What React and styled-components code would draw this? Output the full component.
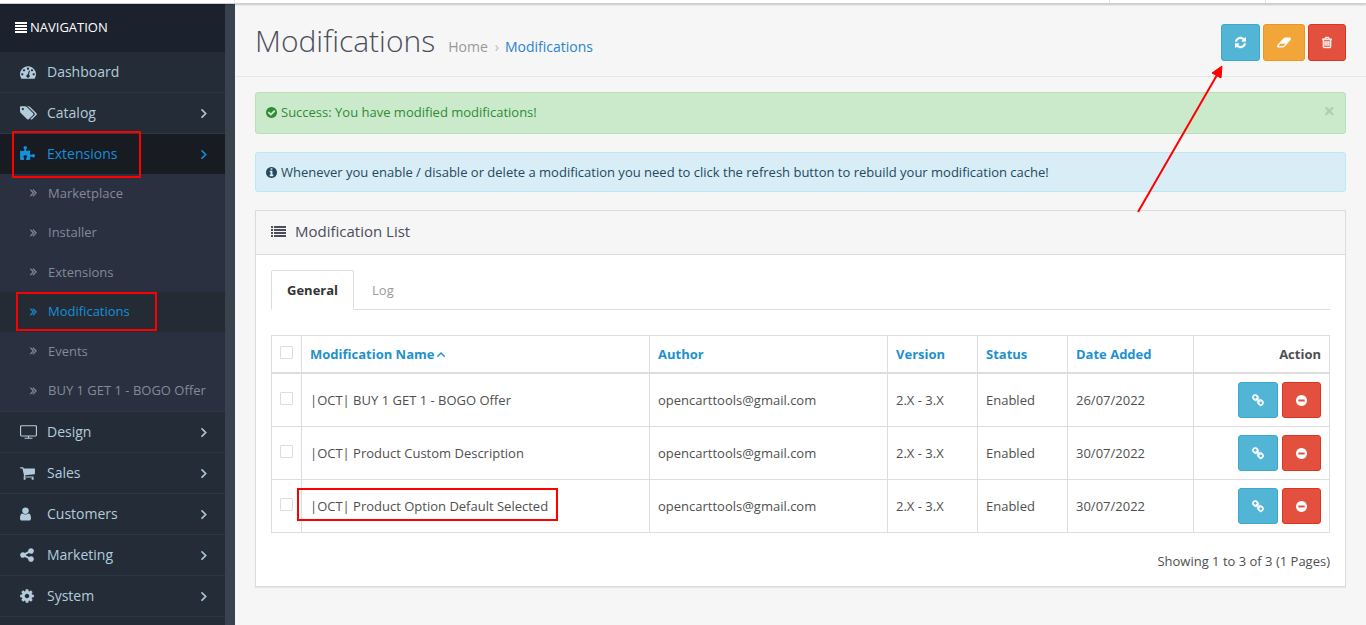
import React from "react";
import styled, { createGlobalStyle, css } from "styled-components";

const CIRCLE =
  "q0 209-103 385.5t-279.5 279.5-385.5 103-385.5-103-279.5-279.5-103-385.5 103-385.5 279.5-279.5 385.5-103 385.5 103 279.5 279.5 103 385.5z";

const ANGLE =
  "q0 13-10 23l-466 466q-10 10-23 10t-23-10l-50-50q-10-10-10-23t10-23l393-393-393-393q-10-10-10-23t10-23l50-50q10-10 23-10t23 10l466 466q10 10 10 23z";

/* Each icon: [viewBox x, viewBox width, path]; all are 1792 units tall. */
const ICONS = {
  dashboard: [0, 1792, "M384 1152q0-53-37.5-90.5t-90.5-37.5-90.5 37.5-37.5 90.5 37.5 90.5 90.5 37.5 90.5-37.5 37.5-90.5zm192-448q0-53-37.5-90.5t-90.5-37.5-90.5 37.5-37.5 90.5 37.5 90.5 90.5 37.5 90.5-37.5 37.5-90.5zm428 481l101-382q6-26-7.5-48.5t-38.5-29.5-48 6.5-30 39.5l-101 382q-60 5-107 43.5t-63 98.5q-20 77 20 146t117 89 146-20 89-117q16-60-6-117t-72-91zm660-33q0-53-37.5-90.5t-90.5-37.5-90.5 37.5-37.5 90.5 37.5 90.5 90.5 37.5 90.5-37.5 37.5-90.5zm-640-640q0-53-37.5-90.5t-90.5-37.5-90.5 37.5-37.5 90.5 37.5 90.5 90.5 37.5 90.5-37.5 37.5-90.5zm448 192q0-53-37.5-90.5t-90.5-37.5-90.5 37.5-37.5 90.5 37.5 90.5 90.5 37.5 90.5-37.5 37.5-90.5zm320 448q0 261-141 483-19 29-54 29h-1402q-35 0-54-29-141-221-141-483 0-182 71-348t191-286 286-191 348-71 348 71 286 191 191 286 71 348z"],
  tags: [0, 1920, "M448 448q0-53-37.5-90.5t-90.5-37.5-90.5 37.5-37.5 90.5 37.5 90.5 90.5 37.5 90.5-37.5 37.5-90.5zm1067 576q0 53-37 90l-491 492q-39 37-91 37-53 0-90-37l-715-716q-38-37-64.5-101t-26.5-117v-416q0-52 38-90t90-38h416q53 0 117 26.5t102 64.5l715 714q37 39 37 91zm384 0q0 53-37 90l-491 492q-39 37-91 37-36 0-59-14t-53-45l470-470q37-37 37-90 0-52-37-91l-715-714q-38-38-102-64.5t-117-26.5h224q53 0 117 26.5t102 64.5l715 714q37 39 37 91z"],
  puzzle: [91, 1664, "M1755 1098q0 81-44.5 135t-123.5 54q-41 0-77.5-17.5t-59-38-56.5-38-71-17.5q-110 0-110 124 0 39 16 115t15 115v5q-22 0-33 1-34 3-97.5 11.5t-115.5 13.5-98 5q-61 0-103-26.5t-42-83.5q0-37 17.5-71t38-56.5 38-59 17.5-77.5q0-79-54-123.5t-135-44.5q-84 0-143 45.5t-59 127.5q0 43 15 83t33.5 64.5 33.5 53 15 50.5q0 45-46 89-37 35-117 35-95 0-245-24-9-2-27.5-4t-27.5-4l-13-2q-1 0-3-1-2 0-2-1v-1024q2 1 17.5 3.5t34 5 21.5 3.5q150 24 245 24 80 0 117-35 46-44 46-89 0-22-15-50.5t-33.5-53-33.5-64.5-15-83q0-82 59-127.5t144-45.5q80 0 134 44.5t54 123.5q0 41-17.5 77.5t-38 59-38 56.5-17.5 71q0 57 42 83.5t103 26.5q64 0 180-15t163-17v2q-1 2-3.5 17.5t-5 34-3.5 21.5q-24 150-24 245 0 80 35 117 44 46 89 46 22 0 50.5-15t53-33.5 64.5-33.5 83-15q82 0 127.5 59t45.5 143z"],
  tv: [0, 1920, "M1792 1248v-960q0-13-9.500-22.500t-22.500-9.500h-1600q-13 0-22.500 9.500t-9.500 22.500v960q0 13 9.500 22.500t22.500 9.500h1600q13 0 22.500-9.500t9.500-22.500zm128-960v960q0 66-47 113t-113 47h-736v128h352q14 0 23 9t9 23v64q0 14-9 23t-23 9h-832q-14 0-23-9t-9-23v-64q0-14 9-23t23-9h352v-128h-736q-66 0-113-47t-47-113v-960q0-66 47-113t113-47h1600q66 0 113 47t47 113z"],
  cart: [64, 1664, "M704 1536q0 52-38 90t-90 38-90-38-38-90 38-90 90-38 90 38 38 90zm896 0q0 52-38 90t-90 38-90-38-38-90 38-90 90-38 90 38 38 90zm128-1088v512q0 24-16.5 42.5t-40.5 21.5l-1044 122q13 60 13 70 0 16-24 64h920q26 0 45 19t19 45-19 45-45 19h-1024q-26 0-45-19t-19-45q0-11 8-31.5t16-36 21.5-40 15.5-29.5l-177-823h-204q-26 0-45-19t-19-45 19-45 45-19h256q16 0 28.5 6.5t19.5 15.5 13 24.5 8 26 5.5 29.5 4.5 26h1201q26 0 45 19t19 45z"],
  user: [256, 1280, "M1536 1399q0 109-62.5 187t-150.5 78h-854q-88 0-150.5-78t-62.5-187q0-85 8.5-160.5t31.5-152 58.5-131 94-89 134.5-34.5q131 128 313 128t313-128q76 0 134.5 34.5t94 89 58.5 131 31.5 152 8.5 160.5zm-256-887q0 159-112.5 271.5t-271.5 112.5-271.5-112.5-112.5-271.5 112.5-271.5 271.5-112.5 271.5 112.5 112.5 271.5z"],
  share: [128, 1536, "M1344 1024q133 0 226.5 93.5t93.5 226.5-93.5 226.5-226.5 93.5-226.5-93.5-93.5-226.5q0-12 2-34l-360-180q-92 86-218 86-133 0-226.5-93.5t-93.5-226.5 93.5-226.5 226.5-93.5q126 0 218 86l360-180q-2-22-2-34 0-133 93.5-226.5t226.5-93.5 226.5 93.5 93.5 226.5-93.5 226.5-226.5 93.5q-126 0-218-86l-360 180q2 22 2 34t-2 34l360 180q92-86 218-86z"],
  cog: [128, 1536, "M1152 896q0-106-75-181t-181-75-181 75-75 181 75 181 181 75 181-75 75-181zm512-109v222q0 12-8 23t-20 13l-185 28q-19 54-39 91 35 50 107 138 10 12 10 25t-9 23q-27 37-99 108t-94 71q-12 0-26-9l-138-108q-44 23-91 38-16 136-29 186-7 28-36 28h-222q-14 0-24.5-8.5t-11.5-21.5l-28-184q-49-16-90-37l-141 107q-10 9-25 9-14 0-25-11-126-114-165-168-7-10-7-23 0-12 8-23 15-21 51-66.5t54-70.5q-27-50-41-99l-183-27q-13-2-21-12.5t-8-23.5v-222q0-12 8-23t19-13l186-28q14-46 39-92-40-57-107-138-10-12-10-24 0-10 9-23 26-36 98.5-107.5t94.5-71.5q13 0 26 10l138 107q44-23 91-38 16-136 29-186 7-28 36-28h222q14 0 24.5 8.5t11.5 21.5l28 184q49 16 90 37l142-107q9-9 24-9 13 0 25 10 129 119 165 170 7 8 7 22 0 12-8 23-15 21-51 66.5t-54 70.5q26 50 41 98l183 28q13 2 21 12.5t8 23.5z"],
  refresh: [128, 1536, "M1639 1056q0 5-1 7-64 268-268 434.5t-478 166.5q-146 0-282.5-55t-243.5-157l-129 129q-19 19-45 19t-45-19-19-45v-448q0-26 19-45t45-19h448q26 0 45 19t19 45-19 45l-137 137q71 66 161 102t187 36q134 0 250-65t186-179q11-17 53-117 8-23 30-23h192q13 0 22.5 9.5t9.5 22.5zm25-800v448q0 26-19 45t-45 19h-448q-26 0-45-19t-19-45 19-45l138-138q-148-137-349-137-134 0-250 65t-186 179q-11 17-53 117-8 23-30 23h-199q-13 0-22.5-9.5t-9.5-22.5v-7q65-268 270-434.5t480-166.5q146 0 284 55.5t245 156.5l130-129q19-19 45-19t45 19 19 45z"],
  eraser: [64, 1920, "M960 1408l336-384h-768l-336 384h768zm1013-1077q15 34 9.5 71.5t-30.5 65.5l-896 1024q-38 44-96 44h-768q-38 0-69.5-20.5t-47.5-54.5q-15-34-9.5-71.5t30.5-65.5l896-1024q38-44 96-44h768q38 0 69.5 20.5t47.5 54.5z"],
  trash: [192, 1408, "M704 736v576q0 14-9 23t-23 9h-64q-14 0-23-9t-9-23v-576q0-14 9-23t23-9h64q14 0 23 9t9 23zm256 0v576q0 14-9 23t-23 9h-64q-14 0-23-9t-9-23v-576q0-14 9-23t23-9h64q14 0 23 9t9 23zm256 0v576q0 14-9 23t-23 9h-64q-14 0-23-9t-9-23v-576q0-14 9-23t23-9h64q14 0 23 9t9 23zm128 724v-948h-896v948q0 22 7 40.5t14.5 27 10.5 8.5h832q3 0 10.5-8.5t14.5-27 7-40.5zm-672-1076h448l-48-117q-7-9-17-11h-317q-10 2-17 11zm928 32v64q0 14-9 23t-23 9h-96v948q0 83-47 143.5t-113 60.5h-832q-66 0-113-58.5t-47-141.5v-952h-96q-14 0-23-9t-9-23v-64q0-14 9-23t23-9h309l70-167q15-37 54-63t79-26h320q40 0 79 26t54 63l70 167h309q14 0 23 9t9 23z"],
  check: [128, 1536, "M1412 734q0-28-18-46l-91-90q-19-19-45-19t-45 19l-408 407-226-226q-19-19-45-19t-45 19l-91 90q-18 18-18 46 0 27 18 45l362 362q19 19 45 19 27 0 46-19l543-543q18-18 18-45zm252 162" + CIRCLE],
  info: [128, 1536, "M1152 1376v-160q0-14-9-23t-23-9h-96v-512q0-14-9-23t-23-9h-320q-14 0-23 9t-9 23v160q0 14 9 23t23 9h96v320h-96q-14 0-23 9t-9 23v160q0 14 9 23t23 9h448q14 0 23-9t9-23zm-128-896v-160q0-14-9-23t-23-9h-192q-14 0-23 9t-9 23v160q0 14 9 23t23 9h192q14 0 23-9t9-23zm640 416" + CIRCLE],
  minus: [128, 1536, "M1344 960v-128q0-26-19-45t-45-19h-768q-26 0-45 19t-19 45v128q0 26 19 45t45 19h768q26 0 45-19t19-45zm320-64" + CIRCLE],
  link: [64, 1664, "M1520 1216q0-40-28-68l-208-208q-28-28-68-28-42 0-72 32 3 3 19 18.5t21.5 21.5 15 19 13 25.5 3.5 27.5q0 40-28 68t-68 28q-15 0-27.5-3.5t-25.5-13-19-15-21.5-21.5-18.5-19q-33 31-33 73 0 40 28 68l206 207q27 27 68 27 40 0 68-26l147-146q28-28 28-67zm-703-705q0-40-28-68l-206-207q-28-28-68-28-39 0-68 27l-147 146q-28 28-28 67 0 40 28 68l208 208q27 27 68 27 42 0 72-31-3-3-19-18.5t-21.5-21.5-15-19-13-25.5-3.5-27.5q0-40 28-68t68-28q15 0 27.5 3.5t25.5 13 19 15 21.5 21.5 18.5 19q33-31 33-73zm895 705q0 120-85 203l-147 146q-83 83-203 83-121 0-204-85l-206-207q-83-83-83-203 0-123 88-209l-88-88q-86 88-208 88-120 0-204-84l-208-208q-84-84-84-204t85-203l147-146q83-83 203-83 121 0 204 85l206 207q83 83 83 203 0 123-88 209l88 88q86-88 208-88 120 0 204 84l208 208q84 84 84 204z"],
  angleRight: [576, 640, "M1171 960" + ANGLE],
  angleDouble: [384, 1024, "M979 960" + ANGLE + "M1363 960" + ANGLE],
  angleUp: [384, 1024, "M1395 1184q0 13-10 23l-50 50q-10 10-23 10t-23-10l-393-393-393 393q-10 10-23 10t-23-10l-50-50q-10-10-10-23t10-23l466-466q10-10 23-10t23 10l466 466q10 10 10 23z"],
  bars: [0, 1792, "M0 149h1792v299h-1792zM0 597h1792v299h-1792zM0 1045h1792v299h-1792zM0 1493h1792v299h-1792z"],
  list: [0, 1792, "M0 239h239v239h-239zM358 239h1434v239h-1434zM0 597h239v239h-239zM358 597h1434v239h-1434zM0 956h239v239h-239zM358 956h1434v239h-1434zM0 1314h239v239h-239zM358 1314h1434v239h-1434z"],
};

const IconSvg = styled.svg`
  display: block;
  flex: none;
  fill: currentColor;
  stroke: currentColor;
  stroke-width: ${(p) => (p.$bold ? 60 : 0)};
`;

function Icon({ name, size = 13, bold = false }) {
  const [x, w, d] = ICONS[name];
  return (
    <IconSvg
      $bold={bold}
      aria-hidden="true"
      height={size}
      width={Math.round((w / 1792) * size)}
      viewBox={`${x} 0 ${w} 1792`}
    >
      <path d={d} />
    </IconSvg>
  );
}

const GlobalStyle = createGlobalStyle`
  *, *::before, *::after { box-sizing: border-box; }
  body {
    margin: 0;
    background: #f6f6f6;
    color: #4c4d5a;
    font: 13px/20px "Open Sans", "Liberation Sans", sans-serif;
  }
  a { color: inherit; text-decoration: none; }
  ul, ol { margin: 0; padding: 0; list-style: none; }
`;

const Page = styled.div`
  display: flex;
  flex-direction: column;
  min-height: 100vh;
`;

const TopBar = styled.header`
  position: relative;
  display: flex;
  height: 4px;
  background: #fff;
  border-bottom: 1px solid #cfcfcf;
  box-shadow: 0 1px 2px rgba(0, 0, 0, 0.2);
`;

const TopCell = styled.div`
  flex: ${(p) => (p.$width ? "none" : 1)};
  width: ${(p) => p.$width || "auto"};
  border-right: 1px solid ${(p) => (p.$last ? "transparent" : "#e4e4e4")};
`;

const Body = styled.div`
  display: flex;
  flex: 1;
`;

const Sidebar = styled.nav`
  flex: none;
  width: 235px;
  background: #242d37;
  border-right: 10px solid #3a424e;
  color: #b3cbdd;
`;

const NavTitle = styled.div`
  display: flex;
  align-items: center;
  gap: 3px;
  height: 48px;
  padding: 0 15px 2px;
  background: #1c212e;
  color: #fff;
`;

/* Red frame that singles out an element of the page. */
const marked = css`
  position: relative;
  &::after {
    content: "";
    position: absolute;
    inset: ${(p) => p.$mark};
    border: 2px solid #f00;
    pointer-events: none;
  }
`;

const NavItem = styled.li`
  border-bottom: 1px solid #2d3843;
`;

const NavLink = styled.a`
  display: flex;
  align-items: center;
  height: 40px;
  padding: 0 18px 0 20px;
  font-size: 14px;
  ${(p) => p.$active && css`background: #181b22; color: #1490dc;`}
  ${(p) => p.$mark && marked}
`;

const NavIcon = styled.span`
  flex: none;
  width: 27px;
`;

const NavText = styled.span`
  flex: 1;
`;

const SubList = styled.ul`
  background: #2a3040;
`;

const SubLink = styled.a`
  display: flex;
  align-items: center;
  gap: 11px;
  height: 39px;
  padding: 0 0 2px 30px;
  color: #818b99;
  li:nth-child(even) > & { height: 40px; }
  ${(p) => p.$active && css`background: #242b35; color: #1490dc;`}
  ${(p) => p.$mark && marked}
`;

const Content = styled.main`
  flex: 1;
  min-width: 0;
`;

const PageHeader = styled.div`
  position: relative;
  display: flex;
  justify-content: space-between;
  align-items: flex-start;
  height: 73px;
  padding: 20px;
  border-bottom: 1px solid #e7e7e7;
`;

const TitleGroup = styled.div`
  display: flex;
  align-items: baseline;
  gap: 13px;
`;

const Title = styled.h1`
  margin: 0;
  font-size: 30px;
  font-weight: 300;
  line-height: 34px;
`;

const Crumbs = styled.ol`
  display: flex;
  gap: 6px;
  font-size: 14px;
`;

const Crumb = styled.li`
  display: flex;
  gap: 7px;
  color: ${(p) => (p.$current ? "#2a84cf" : "#999")};
  &:not(:last-child)::after { content: "›"; color: #bbb; }
`;

const ButtonRow = styled.div`
  display: flex;
  justify-content: flex-end;
  gap: ${(p) => p.$gap || "4px"};
`;

const TONES = {
  info: css`background: #53b5d5; border-color: #39a9ce;`,
  warning: css`background: #f2a63a; border-color: #ee961d;`,
  danger: css`background: #e4503e; border-color: #dc3522;`,
};

const Button = styled.button`
  display: flex;
  align-items: center;
  justify-content: center;
  height: ${(p) => (p.$small ? "36px" : "37px")};
  padding: 0 13px;
  border: 1px solid;
  border-radius: 3px;
  color: #fff;
  cursor: pointer;
  ${(p) => TONES[p.$tone]}
`;

const Arrow = styled.svg`
  position: absolute;
  top: 60px;
  right: 140px;
  pointer-events: none;
`;

const Stack = styled.div`
  display: flex;
  flex-direction: column;
  gap: 18px;
  padding: 15px 20px;
`;

const Alert = styled.div`
  display: flex;
  align-items: center;
  gap: 4px;
  padding: ${(p) => (p.$success ? "9px 10px 11px" : "9px 10px")};
  border: 1px solid ${(p) => (p.$success ? "#b8e1b8" : "#bce8f1")};
  border-radius: 3px;
  background: ${(p) => (p.$success ? "#cbeacb" : "#d9edf7")};
  color: ${(p) => (p.$success ? "#2f8b36" : "#22495e")};
`;

const Close = styled.button`
  margin-left: auto;
  padding: 0 0 2px;
  border: 0;
  background: none;
  color: #a8d3a8;
  font: bold 20px/16px "Open Sans", sans-serif;
  cursor: pointer;
`;

const Panel = styled.section`
  border: 1px solid #dcdcdc;
  background: #fff;
  box-shadow: 0 1px 1px rgba(0, 0, 0, 0.06);
`;

const PanelTitle = styled.h2`
  display: flex;
  align-items: center;
  gap: 9px;
  margin: 0;
  height: 44px;
  padding: 0 15px 3px;
  border-bottom: 1px solid #dcdcdc;
  background: #f6f6f6;
  font-size: 15px;
  font-weight: 400;
`;

const PanelBody = styled.div`
  padding: 15px;
`;

const Tabs = styled.div`
  display: flex;
  gap: 2px;
  margin-bottom: 25px;
  border-bottom: 1px solid #ddd;
`;

const Tab = styled.button`
  height: 40px;
  margin-bottom: -1px;
  padding: 0 15px;
  border: 1px solid transparent;
  border-radius: 2px 2px 0 0;
  background: transparent;
  color: #999;
  font: inherit;
  cursor: pointer;
  ${(p) => p.$active && css`
    border-color: #ddd #ddd #fff;
    background: #fff;
    color: #333;
    font-weight: 700;
  `}
`;

const Table = styled.table`
  width: 100%;
  border-collapse: collapse;
  table-layout: fixed;
  color: #4f4f4f;
`;

const Col = styled.col`
  width: ${(p) => p.$width};
`;

const cell = css`
  padding: 8px;
  border: 1px solid #ddd;
  text-align: ${(p) => (p.$right ? "right" : "left")};
  vertical-align: middle;
`;

const Th = styled.th`
  ${cell}
  height: 37px;
  border-bottom-width: 2px;
  color: ${(p) => (p.$plain ? "#4f4f4f" : "#1e91cf")};
  font-weight: 700;
`;

const Td = styled.td`
  ${cell}
`;

const SortLink = styled.a`
  display: flex;
  align-items: center;
  gap: 3px;
`;

const Name = styled.span`
  display: inline-block;
  ${(p) => p.$mark && marked}
`;

const Checkbox = styled.input`
  appearance: none;
  display: block;
  width: 13px;
  height: 13px;
  margin: 0 0 3px;
  border: 1px solid #ddd;
  border-radius: 1px;
  background: #fff;
`;

const Summary = styled.p`
  margin: 18px 0 0;
  text-align: right;
  color: #4f4f4f;
`;

const MENU = [
  { label: "Dashboard", icon: "dashboard" },
  { label: "Catalog", icon: "tags", arrow: true },
  {
    label: "Extensions",
    icon: "puzzle",
    arrow: true,
    active: true,
    mark: "-3px 84px -4px 12px",
    children: [
      { label: "Marketplace" },
      { label: "Installer" },
      { label: "Extensions" },
      { label: "Modifications", active: true, mark: "0 68px 1px 16px" },
      { label: "Events" },
      { label: "BUY 1 GET 1 - BOGO Offer" },
    ],
  },
  { label: "Design", icon: "tv", arrow: true },
  { label: "Sales", icon: "cart", arrow: true },
  { label: "Customers", icon: "user", arrow: true },
  { label: "Marketing", icon: "share", arrow: true },
  { label: "System", icon: "cog", arrow: true },
];

const ROWS = [
  { name: "|OCT| BUY 1 GET 1 - BOGO Offer", date: "26/07/2022" },
  { name: "|OCT| Product Custom Description", date: "30/07/2022" },
  { name: "|OCT| Product Option Default Selected", date: "30/07/2022", mark: "-8px -10px -5px -13px" },
];

export default function App() {
  return (
    <Page>
      <GlobalStyle />
      <TopBar>
        <TopCell $width="235px" />
        <TopCell />
        <TopCell $width="156px" />
        <TopCell $width="100px" $last />
      </TopBar>
      <Body>
        <Sidebar aria-label="Navigation">
          <NavTitle>
            <Icon name="bars" size={12} />
            NAVIGATION
          </NavTitle>
          <ul>
            {MENU.map((item) => (
              <NavItem key={item.label}>
                <NavLink href="#" $active={item.active} $mark={item.mark}>
                  <NavIcon><Icon name={item.icon} size={16} /></NavIcon>
                  <NavText>{item.label}</NavText>
                  {item.arrow && <Icon name="angleRight" size={16} bold />}
                </NavLink>
                {item.children && (
                  <SubList>
                    {item.children.map((sub) => (
                      <li key={sub.label}>
                        <SubLink href="#" $active={sub.active} $mark={sub.mark}>
                          <Icon name="angleDouble" size={13} bold />
                          {sub.label}
                        </SubLink>
                      </li>
                    ))}
                  </SubList>
                )}
              </NavItem>
            ))}
          </ul>
        </Sidebar>
        <Content>
          <PageHeader>
            <TitleGroup>
              <Title>Modifications</Title>
              <Crumbs>
                <Crumb><a href="#">Home</a></Crumb>
                <Crumb $current><a href="#">Modifications</a></Crumb>
              </Crumbs>
            </TitleGroup>
            <ButtonRow $gap="3px">
              <Button type="button" $tone="info" aria-label="Refresh"><Icon name="refresh" bold /></Button>
              <Button type="button" $tone="warning" aria-label="Clear"><Icon name="eraser" bold /></Button>
              <Button type="button" $tone="danger" aria-label="Delete"><Icon name="trash" bold /></Button>
            </ButtonRow>
            <Arrow width="90" height="150" viewBox="0 0 90 150" aria-hidden="true">
              <path d="M2 148L81 11" stroke="#f00" strokeWidth="2" fill="none" />
              <path d="M86 2L76 9L85 14Z" fill="#f00" stroke="#f00" />
            </Arrow>
          </PageHeader>
          <Stack>
            <Alert $success role="status">
              <Icon name="check" />
              Success: You have modified modifications!
              <Close type="button" aria-label="Close">×</Close>
            </Alert>
            <Alert role="note">
              <Icon name="info" />
              Whenever you enable / disable or delete a modification you need to click the refresh button to rebuild your modification cache!
            </Alert>
            <Panel>
              <PanelTitle>
                <Icon name="list" size={15} />
                Modification List
              </PanelTitle>
              <PanelBody>
                <Tabs role="tablist">
                  <Tab type="button" role="tab" aria-selected="true" $active>General</Tab>
                  <Tab type="button" role="tab" aria-selected="false">Log</Tab>
                </Tabs>
                <Table>
                  <colgroup>
                    <Col $width="30px" />
                    <Col />
                    <Col $width="238px" />
                    <Col $width="90px" />
                    <Col $width="90px" />
                    <Col $width="126px" />
                    <Col $width="136px" />
                  </colgroup>
                  <thead>
                    <tr>
                      <Th><Checkbox type="checkbox" aria-label="Select all" /></Th>
                      <Th><SortLink href="#">Modification Name <Icon name="angleUp" size={14} bold /></SortLink></Th>
                      <Th><a href="#">Author</a></Th>
                      <Th><a href="#">Version</a></Th>
                      <Th><a href="#">Status</a></Th>
                      <Th><a href="#">Date Added</a></Th>
                      <Th $plain $right>Action</Th>
                    </tr>
                  </thead>
                  <tbody>
                    {ROWS.map((row) => (
                      <tr key={row.name}>
                        <Td><Checkbox type="checkbox" aria-label={`Select ${row.name}`} /></Td>
                        <Td><Name $mark={row.mark}>{row.name}</Name></Td>
                        <Td>opencarttools@gmail.com</Td>
                        <Td>2.X - 3.X</Td>
                        <Td>Enabled</Td>
                        <Td>{row.date}</Td>
                        <Td $right>
                          <ButtonRow>
                            <Button type="button" $small $tone="info" aria-label="Open link"><Icon name="link" bold /></Button>
                            <Button type="button" $small $tone="danger" aria-label="Disable"><Icon name="minus" /></Button>
                          </ButtonRow>
                        </Td>
                      </tr>
                    ))}
                  </tbody>
                </Table>
                <Summary>Showing 1 to 3 of 3 (1 Pages)</Summary>
              </PanelBody>
            </Panel>
          </Stack>
        </Content>
      </Body>
    </Page>
  );
}
